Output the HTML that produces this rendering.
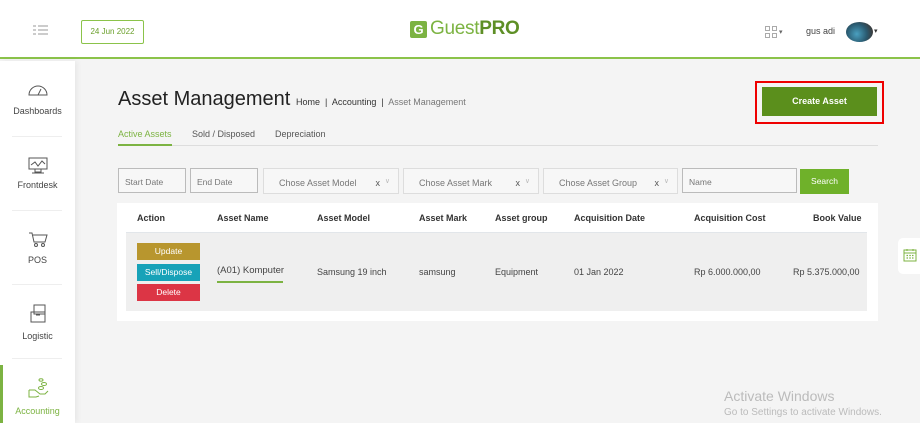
<!DOCTYPE html>
<html><head><meta charset="utf-8"><style>
*{box-sizing:border-box;margin:0;padding:0}
html,body{width:920px;height:423px;overflow:hidden}
body{background:#f4f4f4;font-family:"Liberation Sans",sans-serif;position:relative;color:#333}
.a{position:absolute;white-space:nowrap}
.hdr{left:0;top:0;width:920px;height:59px;background:#fff;border-bottom:2px solid #8bc34a}
.side{left:0;top:61px;width:75px;height:362px;background:#fff;box-shadow:2px 0 6px rgba(0,0,0,.06)}
.si{position:absolute;left:0;width:75px;height:45px;text-align:center;font-size:9px;color:#444}
.si svg{display:block;margin:0 auto}
.sep{position:absolute;left:12px;width:50px;height:1px;background:#eee}
.inp{position:absolute;top:168px;height:25px;border:1px solid #bbb;background:#f7f7f7;font-size:8.5px;color:#777;padding:8px 6px;white-space:nowrap}
.sel{position:absolute;top:168px;height:26px;border:1px solid #ddd;background:#f7f7f7;font-size:9px;color:#777;padding:9px 15px;white-space:nowrap}
.sel b{position:absolute;right:18px;top:9px;font-weight:normal;color:#555}
.sel i{position:absolute;right:8px;top:8px;font-style:normal;color:#bbb;font-size:7px}
.th{position:absolute;top:213px;font-size:9px;font-weight:bold;color:#333;white-space:nowrap}
.td{position:absolute;top:267px;font-size:9px;color:#444;white-space:nowrap}
.btn{position:absolute;left:137px;width:63px;height:17px;color:#fff;font-size:8.5px;text-align:center;line-height:17px}
</style></head><body>
<div class="a hdr"></div>
<div class="a" style="left:33px;top:25px;width:16px;height:10px">
<div style="position:absolute;left:0;top:0;width:3px;height:2px;background:#ccc"></div><div style="position:absolute;left:5px;top:0;width:10px;height:2px;background:#ccc"></div>
<div style="position:absolute;left:0;top:4px;width:3px;height:2px;background:#ccc"></div><div style="position:absolute;left:5px;top:4px;width:10px;height:2px;background:#ccc"></div>
<div style="position:absolute;left:0;top:8px;width:3px;height:2px;background:#ccc"></div><div style="position:absolute;left:5px;top:8px;width:10px;height:2px;background:#ccc"></div></div>
<div class="a" style="left:81px;top:20px;width:63px;height:24px;border:1px solid #8bc34a;border-radius:2px;font-size:8px;color:#6a9f2a;text-align:center;line-height:22px">24 Jun 2022</div>
<div class="a" style="left:410px;top:21px;width:17px;height:17px;background:#7cb342;border-radius:2px;color:#fff;font-weight:bold;font-size:13px;text-align:center;line-height:17px">G</div>
<div class="a" style="left:430px;top:18px;font-size:19px;color:#7cb342;letter-spacing:-0.3px">Guest<b style="color:#5e8f26">PRO</b></div>
<div class="a" style="left:765px;top:26px;width:12px;height:12px">
<div style="position:absolute;left:0;top:0;width:5px;height:5px;border:1px solid #aaa"></div><div style="position:absolute;left:7px;top:0;width:5px;height:5px;border:1px solid #aaa"></div>
<div style="position:absolute;left:0;top:7px;width:5px;height:5px;border:1px solid #aaa"></div><div style="position:absolute;left:7px;top:7px;width:5px;height:5px;border:1px solid #aaa"></div></div>
<div class="a" style="left:779px;top:28px;font-size:7px;color:#666">▾</div>
<div class="a" style="left:806px;top:26px;font-size:9px;color:#444">gus adi</div>
<div class="a" style="left:846px;top:22px;width:27px;height:20px;border-radius:50%;background:radial-gradient(circle at 40% 60%,#4aa0c0,#2a5a70 50%,#3b3b3b 80%)"></div>
<div class="a" style="left:874px;top:27px;font-size:7px;color:#333">▾</div>

<div class="a side"></div>
<div class="si" style="top:82px"><svg width="22" height="16" viewBox="0 0 22 16"><path d="M2 13 A9 9 0 0 1 20 13 Z" fill="none" stroke="#555" stroke-width="1"/><path d="M11 13 L14 7" stroke="#555"/></svg><div style="margin-top:8px">Dashboards</div></div>
<div class="sep" style="top:136px"></div>
<div class="si" style="top:157px"><svg width="22" height="18" viewBox="0 0 22 18"><rect x="2" y="1" width="18" height="11" fill="none" stroke="#555"/><path d="M4 8 L8 5 L11 9 L15 4 L18 7" fill="none" stroke="#555"/><path d="M8 12 V15 H14 V12 M5 16 H17" fill="none" stroke="#555"/></svg><div style="margin-top:5px">Frontdesk</div></div>
<div class="sep" style="top:210px"></div>
<div class="si" style="top:231px"><svg width="22" height="18" viewBox="0 0 22 18"><path d="M2 2 H5 L7 11 H18 L20 4 H6" fill="none" stroke="#555"/><circle cx="9" cy="14" r="1.5" fill="none" stroke="#555"/><circle cx="16" cy="14" r="1.5" fill="none" stroke="#555"/></svg><div style="margin-top:6px">POS</div></div>
<div class="sep" style="top:284px"></div>
<div class="si" style="top:302px"><svg width="22" height="22" viewBox="0 0 22 22"><rect x="4" y="10" width="14" height="10" fill="none" stroke="#555"/><rect x="7" y="3" width="11" height="9" fill="none" stroke="#555"/><path d="M9 13 H13" stroke="#555"/></svg><div style="margin-top:7px">Logistic</div></div>
<div class="sep" style="top:358px"></div>
<div class="a" style="left:0;top:365px;width:3px;height:58px;background:#7cb342"></div>
<div class="si" style="top:378px;color:#7cb342"><svg width="24" height="22" viewBox="0 0 24 22"><path d="M3 12 H9 L14 16 H19 L22 13 M3 12 V19 H10 L13 18" fill="none" stroke="#7cb342"/><ellipse cx="15" cy="10" rx="2.5" ry="1.5" fill="none" stroke="#7cb342"/><ellipse cx="18" cy="6" rx="2.5" ry="1.5" fill="none" stroke="#7cb342"/><ellipse cx="15" cy="2" rx="2" ry="1.2" fill="none" stroke="#7cb342"/></svg><div style="margin-top:6px">Accounting</div></div>

<div class="a" style="left:118px;top:88px;font-size:20px;color:#222">Asset Management</div>
<div class="a" style="left:296px;top:97px;font-size:9px;color:#333">Home &nbsp;|&nbsp; Accounting &nbsp;|&nbsp; <span style="color:#777">Asset Management</span></div>
<div class="a" style="left:755px;top:81px;width:129px;height:43px;border:2px solid #e00"></div>
<div class="a" style="left:762px;top:87px;width:115px;height:29px;background:#5b8f1c;color:#fff;font-weight:bold;font-size:9px;text-align:center;line-height:29px">Create Asset</div>

<div class="a" style="left:118px;top:145px;width:760px;height:1px;background:#ddd"></div>
<div class="a" style="left:118px;top:129px;font-size:9px;color:#7cb342;padding-bottom:5px;border-bottom:2px solid #7cb342">Active Assets</div>
<div class="a" style="left:192px;top:129px;font-size:9px;color:#555">Sold / Disposed</div>
<div class="a" style="left:275px;top:129px;font-size:9px;color:#555">Depreciation</div>

<div class="inp" style="left:118px;width:68px">Start Date</div>
<div class="inp" style="left:190px;width:68px">End Date</div>
<div class="sel" style="left:263px;width:136px">Chose Asset Model<b>x</b><i>∨</i></div>
<div class="sel" style="left:403px;width:136px">Chose Asset Mark<b>x</b><i>∨</i></div>
<div class="sel" style="left:543px;width:135px">Chose Asset Group<b>x</b><i>∨</i></div>
<div class="inp" style="left:682px;width:115px">Name</div>
<div class="a" style="left:800px;top:169px;width:49px;height:25px;background:#6fb12a;color:#fff;font-size:8.5px;text-align:center;line-height:25px">Search</div>

<div class="a" style="left:117px;top:203px;width:761px;height:118px;background:#fff"></div>
<div class="a" style="left:126px;top:232px;width:741px;height:1px;background:#e2e6ea"></div>
<div class="a" style="left:126px;top:233px;width:741px;height:78px;background:#efefef"></div>
<div class="th" style="left:137px">Action</div>
<div class="th" style="left:217px">Asset Name</div>
<div class="th" style="left:317px">Asset Model</div>
<div class="th" style="left:419px">Asset Mark</div>
<div class="th" style="left:495px">Asset group</div>
<div class="th" style="left:574px">Acquisition Date</div>
<div class="th" style="left:694px">Acquisition Cost</div>
<div class="th" style="left:813px">Book Value</div>
<div class="btn" style="top:243px;background:#b8962e">Update</div>
<div class="btn" style="top:264px;background:#17a2b8">Sell/Dispose</div>
<div class="btn" style="top:284px;background:#dc3545">Delete</div>
<div class="td" style="left:217px;top:265px;font-size:9.5px;padding-bottom:5px;border-bottom:2px solid #7cb342;width:66px">(A01) Komputer</div>
<div class="td" style="left:317px">Samsung 19 inch</div>
<div class="td" style="left:419px">samsung</div>
<div class="td" style="left:495px">Equipment</div>
<div class="td" style="left:574px">01 Jan 2022</div>
<div class="td" style="left:694px">Rp 6.000.000,00</div>
<div class="td" style="left:793px">Rp 5.375.000,00</div>

<div class="a" style="left:898px;top:238px;width:22px;height:36px;background:#fff;border-radius:5px 0 0 5px"></div>
<svg class="a" style="left:903px;top:248px" width="14" height="14" viewBox="0 0 14 14"><rect x="1" y="2" width="12" height="11" fill="none" stroke="#7cb342"/><path d="M4 1 V3 M10 1 V3 M1 5 H13" stroke="#7cb342"/><path d="M3.5 7.5h1.5M6.3 7.5h1.5M9 7.5h1.5M3.5 10h1.5M6.3 10h1.5M9 10h1.5" stroke="#7cb342" stroke-width="1.2"/></svg>

<div class="a" style="left:724px;top:388px;font-size:14px;color:#bbb">Activate Windows</div>
<div class="a" style="left:724px;top:407px;font-size:10px;color:#bbb">Go to Settings to activate Windows.</div>
</body></html>
